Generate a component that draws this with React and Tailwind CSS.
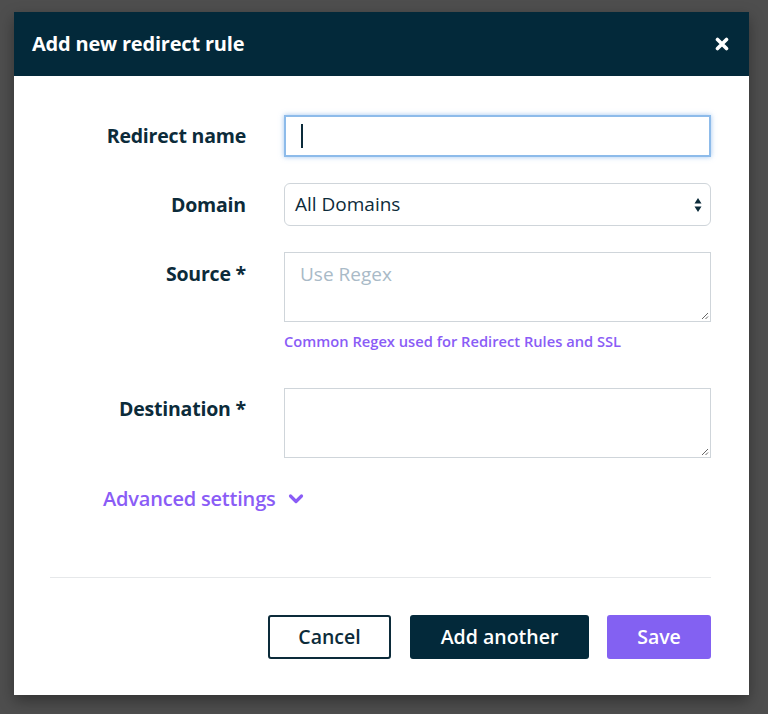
import React from "react";

const font = { fontFamily: '"Open Sans", "Liberation Sans", sans-serif' };

function Row({ label, children, top = false, labelPad = "" }) {
  return (
    <div className={`flex ${top ? "items-start" : "items-center"} pr-[38px]`}>
      <div className={`w-[232px] shrink-0 text-right text-[19.5px] font-bold text-[#0c2b3a] tracking-[-0.2px] ${labelPad}`}>{label}</div>
      <div className="ml-[38px] flex-1">{children}</div>
    </div>
  );
}

export default function App() {
  return (
    <div style={font} className="min-h-[714px] w-[768px] bg-[#4e4e4e] pt-[12px] pl-[14px] overflow-hidden">
      <div className="w-[735px] bg-white shadow-[0_6px_14px_rgba(0,0,0,0.35)]">
        <div className="h-[64px] bg-[#03293a] flex items-center justify-between pl-[18px] pr-[20px]">
          <div className="text-white text-[20px] font-bold tracking-[-0.2px]">Add new redirect rule</div>
          <svg width="14" height="14" viewBox="0 0 14 14">
            <path d="M2.5 2.5 L11.5 11.5 M11.5 2.5 L2.5 11.5" stroke="white" strokeWidth="3.6" strokeLinecap="round" />
          </svg>
        </div>
        <div className="pt-[39px]">
          <Row label="Redirect name">
            <div className="h-[42px] border-2 border-[#8dbbea] shadow-[0_0_5px_rgba(100,160,230,0.6)] flex items-center pl-[15px]">
              <div className="w-[1.5px] h-[24px] bg-[#0c2b3a]" />
            </div>
          </Row>
          <div className="h-[26px]" />
          <Row label="Domain">
            <div className="h-[43px] border border-[#cfd5da] rounded-[6px] flex items-center justify-between pl-[10px] pr-[8px]">
              <span className="text-[19px] text-[#0c2b3a]">All Domains</span>
              <svg width="8" height="16" viewBox="0 0 8 16">
                <path d="M4 1 L7.5 6.5 L0.5 6.5 Z M4 15 L7.5 9.5 L0.5 9.5 Z" fill="#0c2b3a" />
              </svg>
            </div>
          </Row>
          <div className="h-[26px]" />
          <Row label="Source *" top labelPad="pt-[7px]">
            <div className="relative h-[70px] border border-[#cfd5da] pl-[15px] pt-[7px]">
              <span className="text-[19px] text-[#a9bac7]">Use Regex</span>
              <svg className="absolute right-[1px] bottom-[1px]" width="10" height="10" viewBox="0 0 10 10">
                <path d="M9 3 L3 9 M9 6.5 L6.5 9" stroke="#666" strokeWidth="1" />
              </svg>
            </div>
            <div className="mt-[8px] text-[14.7px] font-semibold text-[#8a5cf6]">Common Regex used for Redirect Rules and SSL</div>
          </Row>
          <div className="h-[36px]" />
          <Row label="Destination *" top labelPad="pt-[6px]">
            <div className="relative h-[70px] border border-[#cfd5da]">
              <svg className="absolute right-[1px] bottom-[1px]" width="10" height="10" viewBox="0 0 10 10">
                <path d="M9 3 L3 9 M9 6.5 L6.5 9" stroke="#666" strokeWidth="1" />
              </svg>
            </div>
          </Row>
          <div className="mt-[26px] pl-[89px] flex items-center gap-[12px]">
            <span className="text-[20px] font-semibold text-[#8a5cf6] tracking-[-0.2px]">Advanced settings</span>
            <svg width="16" height="12" viewBox="0 0 16 12">
              <path d="M2.5 3 L8 8.5 L13.5 3" stroke="#8a5cf6" strokeWidth="3.2" fill="none" strokeLinecap="round" strokeLinejoin="round" />
            </svg>
          </div>
          <div className="mt-[63px] ml-[36px] mr-[38px] h-px bg-[#e6e8ea]" />
          <div className="mt-[37px] pb-[36px] pr-[38px] flex justify-end">
            <button className="h-[44px] w-[123px] border-2 border-[#0c2b3a] rounded-[3px] text-[19.5px] font-semibold text-[#0c2b3a] bg-white">Cancel</button>
            <button className="ml-[19px] h-[44px] w-[179px] rounded-[3px] bg-[#03293a] text-[19.5px] font-semibold text-white">Add another</button>
            <button className="ml-[18px] h-[44px] w-[104px] rounded-[3px] bg-[#8361f2] text-[19.5px] font-semibold text-white">Save</button>
          </div>
        </div>
      </div>
    </div>
  );
}
